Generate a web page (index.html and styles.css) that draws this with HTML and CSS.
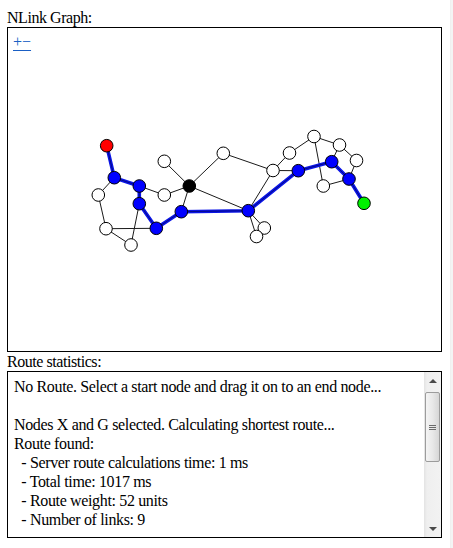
FILE: index.html
```html
<!DOCTYPE html>
<html>
<head>
<meta charset="utf-8">
<link rel="stylesheet" href="styles.css">
</head>
<body>
<div class="label">NLink Graph:</div>
<div class="graph">
  <a class="zoom" href="#">+−</a>
  <svg class="canvas" width="433" height="323" viewBox="0 0 433 323">
    <g transform="translate(-8,-28)">
      <g class="edge">
        <line x1="114.3" y1="177.7" x2="98.3" y2="195"/>
        <line x1="98.3" y1="195" x2="106" y2="228.7"/>
        <line x1="106" y1="228.7" x2="156.3" y2="228.3"/>
        <line x1="106" y1="228.7" x2="131" y2="245"/>
        <line x1="131" y1="245" x2="139.3" y2="203.7"/>
        <line x1="139.3" y1="186" x2="164.3" y2="195"/>
        <line x1="164.3" y1="195" x2="189.3" y2="186"/>
        <line x1="164.3" y1="161.3" x2="189.3" y2="186"/>
        <line x1="189.3" y1="186" x2="223.3" y2="153.3"/>
        <line x1="189.3" y1="186" x2="181.3" y2="211.7"/>
        <line x1="189.3" y1="186" x2="248.3" y2="210.7"/>
        <line x1="223.3" y1="153.3" x2="273" y2="170.5"/>
        <line x1="273" y1="170.5" x2="248.3" y2="210.7"/>
        <line x1="273" y1="170.5" x2="298.3" y2="170.7"/>
        <line x1="273" y1="170.5" x2="289.5" y2="153"/>
        <line x1="289.5" y1="153" x2="314" y2="136.5"/>
        <line x1="314" y1="136.5" x2="339.5" y2="145"/>
        <line x1="314" y1="136.5" x2="323.3" y2="186"/>
        <line x1="339.5" y1="145" x2="356.5" y2="160.5"/>
        <line x1="339.5" y1="145" x2="331.7" y2="161.7"/>
        <line x1="356.5" y1="160.5" x2="349" y2="179"/>
        <line x1="349" y1="179" x2="323.3" y2="186"/>
        <line x1="248.3" y1="210.7" x2="264.3" y2="228"/>
        <line x1="248.3" y1="210.7" x2="256.5" y2="236.5"/>
        <line x1="264.3" y1="228" x2="256.5" y2="236.5"/>
      </g>
      <polyline class="route" points="106.7,145.7 114.3,177.7 139.3,186 139.3,203.7 156.3,228.3 181.3,211.7 248.3,210.7 298.3,170.7 331.7,161.7 349,179 364,203.3"/>
      <polyline class="route-core" points="106.7,145.7 114.3,177.7 139.3,186 139.3,203.7 156.3,228.3 181.3,211.7 248.3,210.7 298.3,170.7 331.7,161.7 349,179 364,203.3"/>
      <g class="node">
        <circle class="white" cx="98.3" cy="195" r="6.3"/>
        <circle class="white" cx="106" cy="228.7" r="6.3"/>
        <circle class="white" cx="131" cy="245" r="6.3"/>
        <circle class="white" cx="164.3" cy="161.3" r="6.3"/>
        <circle class="white" cx="164.3" cy="195" r="6.3"/>
        <circle class="white" cx="223.3" cy="153.3" r="6.3"/>
        <circle class="white" cx="273" cy="170.5" r="6.3"/>
        <circle class="white" cx="289.5" cy="153" r="6.3"/>
        <circle class="white" cx="314" cy="136.5" r="6.3"/>
        <circle class="white" cx="339.5" cy="145" r="6.3"/>
        <circle class="white" cx="356.5" cy="160.5" r="6.3"/>
        <circle class="white" cx="323.3" cy="186" r="6.3"/>
        <circle class="white" cx="264.3" cy="228" r="6.3"/>
        <circle class="white" cx="256.5" cy="236.5" r="6.3"/>
        <circle class="black" cx="189.3" cy="186" r="6.3"/>
        <circle class="red" cx="106.7" cy="145.7" r="6.3"/>
        <circle class="blue" cx="114.3" cy="177.7" r="6.3"/>
        <circle class="blue" cx="139.3" cy="186" r="6.3"/>
        <circle class="blue" cx="139.3" cy="203.7" r="6.3"/>
        <circle class="blue" cx="156.3" cy="228.3" r="6.3"/>
        <circle class="blue" cx="181.3" cy="211.7" r="6.3"/>
        <circle class="blue" cx="248.3" cy="210.7" r="6.3"/>
        <circle class="blue" cx="298.3" cy="170.7" r="6.3"/>
        <circle class="blue" cx="331.7" cy="161.7" r="6.3"/>
        <circle class="blue" cx="349" cy="179" r="6.3"/>
        <circle class="green" cx="364" cy="203.3" r="6.3"/>
      </g>
    </g>
  </svg>
</div>
<div class="label">Route statistics:</div>
<div class="stats">
  <div class="stats-text">No Route. Select a start node and drag it on to an end node...

Nodes X and G selected. Calculating shortest route...
Route found:
  - Server route calculations time: 1 ms
  - Total time: 1017 ms
  - Route weight: 52 units
  - Number of links: 9
</div>
  <div class="scrollbar">
    <div class="sb-btn"><span class="arrow-up"></span></div>
    <div class="sb-track">
      <div class="sb-thumb"><span class="grip"></span></div>
    </div>
    <div class="sb-btn"><span class="arrow-down"></span></div>
  </div>
</div>
</body>
</html>
```

FILE: styles.css
```css
html {
  background: linear-gradient(to right, #ffffff 450px, #ececec 450px, #f4f4f4 451px);
  min-height: 100%;
}
body {
  margin: 8px 0 0 7px;
  font-family: "Liberation Serif", "Times New Roman", serif;
  font-size: 16px;
  color: #000;
  width: 435px;
}
.label {
  line-height: 19px;
  height: 19px;
  letter-spacing: -0.45px;
}
.graph {
  position: relative;
  box-sizing: border-box;
  width: 435px;
  height: 325px;
  border: 1px solid #000;
  background: #fff;
}
.canvas {
  display: block;
}
.zoom {
  position: absolute;
  left: 5px;
  top: 4px;
  font-family: "Liberation Serif", "Times New Roman", serif;
  font-size: 16px;
  line-height: 19px;
  letter-spacing: 0;
  color: #1a5fc4;
  text-decoration: underline;
  text-underline-offset: 3px;
}
.edge line {
  stroke: #1a1a1a;
  stroke-width: 1;
}
.route {
  fill: none;
  stroke: #0a14e6;
  stroke-width: 3.6;
  stroke-linejoin: round;
}
.route-core {
  fill: none;
  stroke: #000040;
  stroke-width: 1;
  opacity: 0.55;
}
.node circle {
  stroke: #000;
  stroke-width: 1;
}
.node .white { fill: #ffffff; }
.node .black { fill: #000000; }
.node .blue { fill: #0000ff; }
.node .red { fill: #ff0000; }
.node .green { fill: #00f000; }

.stats {
  box-sizing: border-box;
  width: 435px;
  height: 167px;
  border: 1px solid #000;
  display: flex;
  background: #fff;
}
.stats-text {
  flex: 1;
  overflow: hidden;
  white-space: pre;
  line-height: 19px;
  letter-spacing: -0.35px;
  padding: 5px 0 0 6px;
}
.scrollbar {
  width: 17px;
  display: flex;
  flex-direction: column;
  background: linear-gradient(to right, #e3e3e3, #efefef 3px, #f2f2f2);
}
.sb-btn {
  height: 17px;
  display: flex;
  align-items: center;
  justify-content: center;
}
.arrow-up {
  width: 0;
  height: 0;
  border-left: 4px solid transparent;
  border-right: 4px solid transparent;
  border-bottom: 4px solid #4a4a4a;
}
.arrow-down {
  width: 0;
  height: 0;
  border-left: 4px solid transparent;
  border-right: 4px solid transparent;
  border-top: 4px solid #4a4a4a;
}
.sb-track {
  flex: 1;
  padding-top: 3px;
}
.sb-thumb {
  box-sizing: border-box;
  margin-left: 1px;
  width: 15px;
  height: 70px;
  border: 1px solid #9c9c9c;
  border-radius: 2px;
  background: linear-gradient(to right, #f4f4f4, #e8e8e8 50%, #d6d6d6);
  display: flex;
  align-items: center;
  justify-content: center;
}
.grip {
  display: block;
  width: 7px;
  height: 5px;
  background: linear-gradient(to bottom, #6a6a6a 1px, transparent 1px, transparent 2px, #6a6a6a 2px, #6a6a6a 3px, transparent 3px, transparent 4px, #6a6a6a 4px);
}
```
